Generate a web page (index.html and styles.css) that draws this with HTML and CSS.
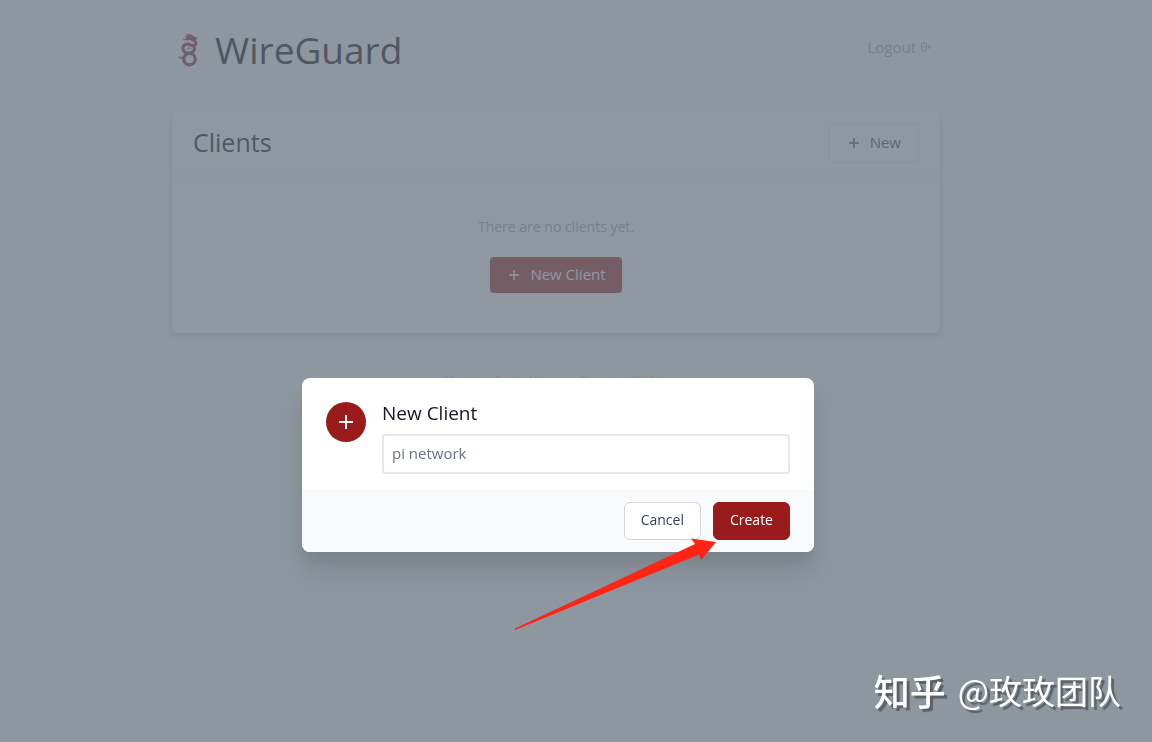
FILE: index.html
```html
<!DOCTYPE html>
<html lang="en">
<head>
<meta charset="utf-8">
<meta name="viewport" content="width=device-width, initial-scale=1">
<title>WireGuard</title>
<link rel="stylesheet" href="styles.css">
</head>
<body>
<div class="page">
  <header class="topbar">
    <h1 class="brand">
      <svg class="logo" viewBox="0 0 22 34" fill="none" stroke="currentColor" stroke-linecap="round" aria-hidden="true">
        <path d="M8 3.500L11 2.700L9.500 1.300L14 1.600L17 3.800L20.500 5.200L19 6.500L14.500 6L11 7.200L6 6.500L10.500 5Z" fill="currentColor" stroke-width=".4"/>
        <path d="M14.500 6C19 8 20 10.500 17.500 12.500C16 13.500 14 11.500 11 11C7.500 11 5 13.500 6 16.500C7 20 10.500 20.500 13 20C16.500 19.500 18.500 17 17 14" stroke-width="3"/>
        <circle cx="12.500" cy="26.200" r="5.700" stroke-width="3.200"/>
        <path d="M10.500 16.500C10.500 14.800 13 14.300 14 15.800" stroke-width="1"/>
        <path d="M7.500 23C6 25 4 25.500 2.500 24" stroke-width="1.600"/>
      </svg>
      <span>WireGuard</span>
    </h1>
    <a class="logout" href="#">Logout
      <svg class="logout-icon" viewBox="0 0 24 24" fill="none" stroke="currentColor" stroke-width="2" stroke-linecap="round" stroke-linejoin="round" aria-hidden="true"><path d="M17 16l4-4m0 0l-4-4m4 4H7m6 4v1a3 3 0 01-3 3H6a3 3 0 01-3-3V7a3 3 0 013-3h4a3 3 0 013 3v1"/></svg>
    </a>
  </header>
  <main class="card">
    <div class="card-head">
      <h2 class="card-title">Clients</h2>
      <button class="new-button" type="button"><svg class="plus" viewBox="0 0 16 16" aria-hidden="true"><path d="M8 4v10M3 9h10"/></svg>New</button>
    </div>
    <div class="empty">
      <p class="empty-text">There are no clients yet.</p>
      <button class="client-button" type="button"><svg class="plus" viewBox="0 0 16 16" aria-hidden="true"><path d="M8 4v10M3 9h10"/></svg>New Client</button>
    </div>
  </main>
  <footer class="credits">Made by <a href="#">Emile Nijssen</a> · <a href="#">Donate</a> · <a href="#">GitHub</a></footer>
</div>

<div class="overlay">
  <form class="modal" role="dialog" aria-modal="true" aria-labelledby="modal-title">
    <div class="modal-body">
      <span class="badge"><svg class="badge-plus" viewBox="0 0 24 24" aria-hidden="true"><path d="M12 5v14M5 12h14"/></svg></span>
      <div class="fields">
        <label class="modal-title" id="modal-title" for="client-name">New Client</label>
        <input class="name-input" id="client-name" type="text" value="pi network">
      </div>
    </div>
    <div class="modal-actions">
      <button class="action" type="button">Cancel</button>
      <button class="action primary" type="button">Create</button>
    </div>
  </form>
</div>

<svg class="arrow" viewBox="0 0 202 92" aria-hidden="true"><path d="M0 90.500L180 6L176 .5L201 4L186 22L184 16.500L0 92Z"/></svg>
<div class="watermark"><span class="watermark-brand">知乎</span><span>@玫玫团队</span></div>
</body>
</html>
```
FILE: styles.css
```css
* { box-sizing: border-box; }

body {
  margin: 0;
  min-height: 100vh;
  background: #f9fafb;
  color: #000;
  font: 15px/24px "Open Sans", "Noto Sans", sans-serif;
}

button, input { font: inherit; }
a { color: inherit; text-decoration: none; }
h1, h2, p { margin: 0; font-weight: 400; }

.page { padding: 20px 40px 0 0; }
.topbar, .card { width: 100%; max-width: 768px; margin: 0 auto; }

.topbar {
  display: flex;
  justify-content: space-between;
  align-items: flex-start;
  padding: 0 8px 0 5px;
}
.brand {
  display: flex;
  align-items: center;
  gap: 16px;
  font-size: 37px;
  line-height: 60px;
}
.logo { width: 22px; height: 34px; color: #7f1d2d; }
.logout {
  display: flex;
  align-items: center;
  gap: 4px;
  padding-top: 15px;
  color: #9ca3af;
}
.logout-icon { width: 12px; height: 12px; }

.card {
  margin-top: 31px;
  overflow: hidden;
  border-radius: 6px;
  background: #fff;
  box-shadow: 0 4px 6px #0000001a, 0 2px 4px #0000000f;
}
.card-head {
  display: flex;
  justify-content: space-between;
  align-items: center;
  padding: 12px 21px;
  border-bottom: 2px solid #f3f4f6;
}
.card-title { padding-bottom: 2px; font-size: 25px; line-height: 38px; }
.new-button, .client-button {
  display: inline-flex;
  align-items: center;
  gap: 8px;
  border-radius: 4px;
}
.new-button {
  height: 40px;
  padding: 0 16px 2px;
  border: 2px solid #f3f4f6;
  background: transparent;
  color: #374151;
}
.plus { width: 16px; height: 16px; fill: none; stroke: currentColor; stroke-width: 1.4; }
.empty {
  display: flex;
  flex-direction: column;
  align-items: center;
  gap: 18px;
  padding: 38px 20px 40px;
}
.empty-text { font-size: 14px; color: #9ca3af; }
.client-button {
  height: 36px;
  padding: 0 16px 2px;
  border: 0;
  background: #991b1b;
  color: #fff;
}
.credits {
  margin-top: 38px;
  text-align: center;
  font-size: 12px;
  line-height: 20px;
  color: #d1d5db;
}

.overlay {
  position: fixed;
  inset: 0;
  padding: 378px 36px 0 0;
  background: #6a7480bf;
}
.modal {
  width: 100%;
  max-width: 512px;
  margin: 0 auto;
  overflow: hidden;
  border-radius: 8px;
  background: #fff;
  box-shadow: 0 20px 25px #0000001a, 0 10px 10px #0000000a;
}
.modal-body { display: flex; gap: 16px; padding: 24px 24px 16px; }
.badge {
  display: grid;
  place-items: center;
  flex: none;
  width: 40px;
  height: 40px;
  border-radius: 50%;
  background: #991b1b;
}
.badge-plus { width: 24px; height: 24px; fill: none; stroke: #fff; stroke-width: 2; }
.fields { flex: 1; display: flex; flex-direction: column; gap: 10px; }
.modal-title { font-size: 19px; line-height: 22px; color: #111827; }
.name-input {
  width: 100%;
  height: 40px;
  padding: 0 8px 2px;
  border: 2px solid #e5e7eb;
  border-radius: 3px;
  outline: 0;
  color: #6b7280;
}
.modal-actions {
  display: flex;
  justify-content: flex-end;
  gap: 12px;
  padding: 12px 24px;
  background: #f9fafb;
}
.action {
  height: 38px;
  padding: 0 16px 2px;
  border: 1px solid #d1d5db;
  border-radius: 6px;
  background: #fff;
  color: #374151;
  font-size: 14px;
}
.primary { border-color: #991b1b; background: #991b1b; color: #fff; }

.arrow {
  position: absolute;
  left: 515px;
  top: 538px;
  width: 202px;
  height: 92px;
  fill: #ff2414;
}
.watermark {
  position: fixed;
  right: 31px;
  bottom: 28px;
  display: flex;
  align-items: center;
  gap: 12px;
  color: #fff;
  font: 33px/48px "Noto Sans CJK SC", sans-serif;
  text-shadow: 3px 3px 1px #0000005c;
}
.watermark-brand { font-size: 36px; font-weight: 500; }
```
